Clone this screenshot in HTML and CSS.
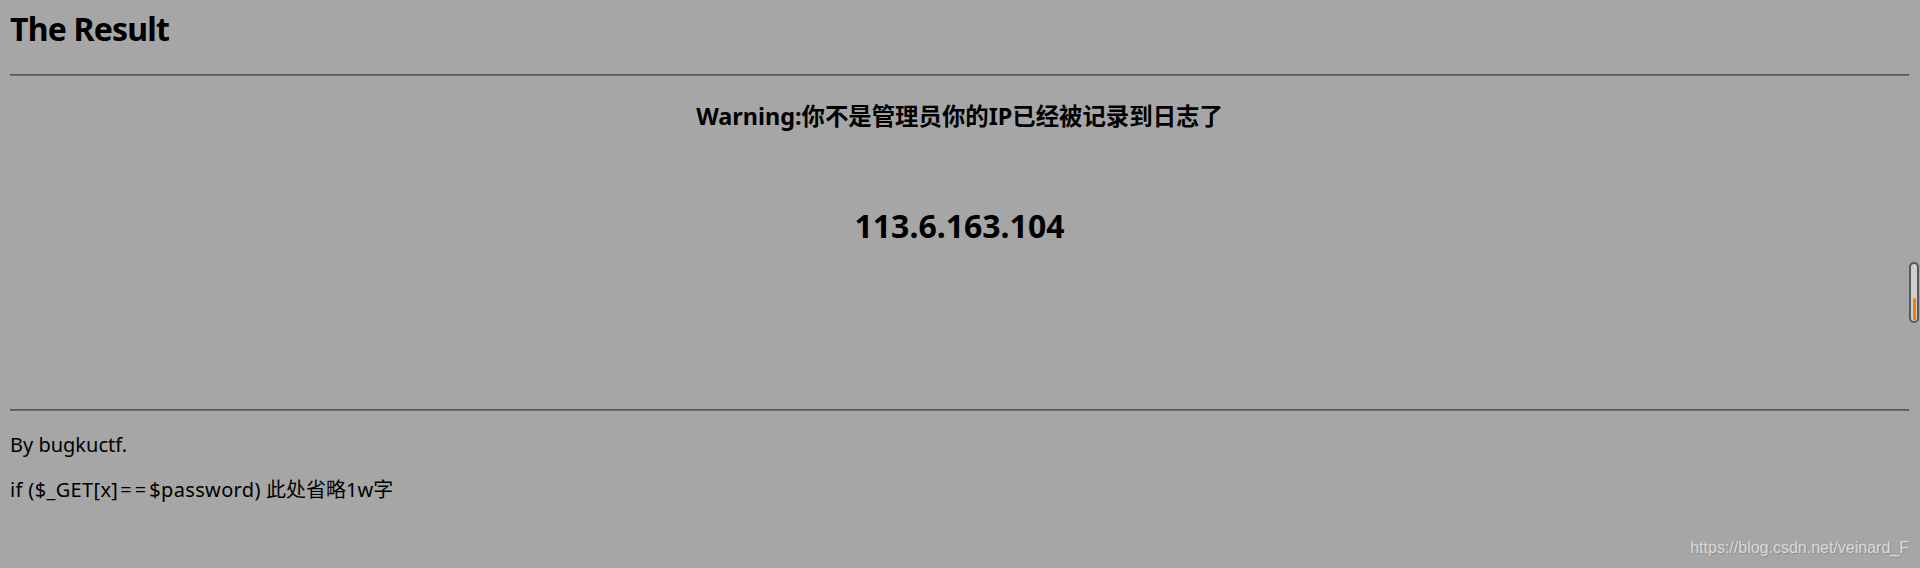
FILE: index.html
```html
<!DOCTYPE html>
<html lang="zh-CN">
<head>
<meta charset="utf-8">
<title>The Result</title>
<link rel="stylesheet" href="styles.css">
</head>
<body>
<h1 class="title">The Result</h1>
<hr class="rule">
<div class="result">
  <h3 class="warning">Warning:你不是管理员你的IP已经被记录到日志了</h3>
  <h1 class="ip">113.6.163.104</h1>
</div>
<hr class="rule">
<p class="line first">By bugkuctf.</p>
<p class="line second"><span class="code">if ($_GET[x]<span class="op">==</span>$password)</span> 此处省略1w字</p>

<div class="meter"><div class="meter-fill"></div></div>
<div class="watermark">https://blog.csdn.net/veinard_F</div>
</body>
</html>
```
FILE: styles.css
```css
html, body {
  height: 100%;
}
body {
  margin: 0;
  padding: 0 11px 0 10px;
  background: #a6a6a6;
  color: #000;
  font-family: "Noto Sans", "Noto Sans CJK SC", sans-serif;
  overflow: hidden;
}
.title {
  margin: 0;
  padding-top: 9px;
  font-size: 32px;
  line-height: 40px;
  font-weight: 700;
  height: 40px;
  letter-spacing: -0.8px;
}
.rule {
  margin: 25px 0 0 0;
  height: 0;
  border: none;
  border-top: 1px solid #555;
  border-bottom: 1px solid #6c6c6c;
}
.result + .rule {
  margin-top: 0;
}
.result {
  height: 333px;
  text-align: center;
  box-sizing: border-box;
  padding-top: 25px;
}
.warning {
  margin: 0;
  font-size: 23.4px;
  line-height: 30px;
  height: 30px;
  font-weight: 700;
}
.ip {
  margin: 75px 0 0 0;
  font-size: 32px;
  line-height: 40px;
  height: 40px;
  font-weight: 700;
}
.line {
  margin: 0;
  font-size: 20px;
  line-height: 27px;
  height: 27px;
}
.code {
  letter-spacing: 0.35px;
}
.op {
  letter-spacing: 3px;
  margin-left: 2px;
}
.first {
  margin-top: 20px;
}
.second {
  margin-top: 18px;
}
.meter {
  position: absolute;
  left: 1909px;
  top: 262px;
  width: 6px;
  height: 57px;
  border: 2px solid #585858;
  border-radius: 5px;
  background: #cfcfcf;
}
.meter-fill {
  position: absolute;
  left: 2px;
  right: 1px;
  top: 34px;
  bottom: 1px;
  border-radius: 2px;
  background: #f47a0c;
}
.watermark {
  position: absolute;
  right: 11px;
  top: 538px;
  font-family: "Liberation Sans", Arial, sans-serif;
  font-size: 16px;
  line-height: 20px;
  color: #dadada;
  text-shadow: 1px 1px 1px #8c8c8c;
}
```
